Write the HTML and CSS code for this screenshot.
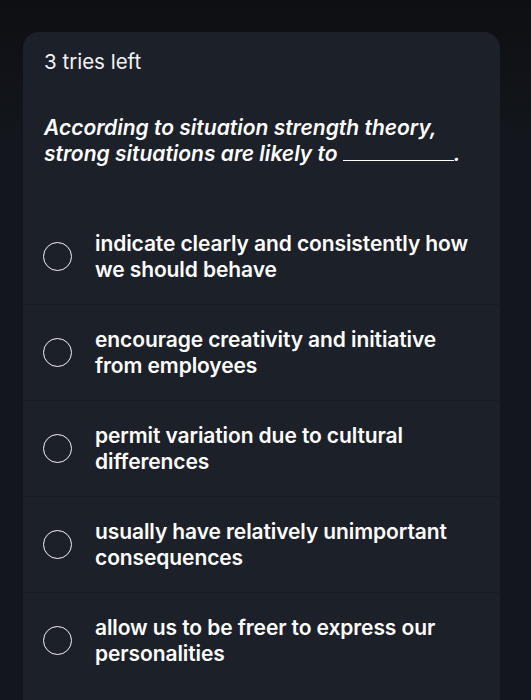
FILE: index.html
```html
<!DOCTYPE html>
<html>

<head>
  <title>Question</title>
  <link rel="stylesheet" href="styles.css">
</head>

<body>
  <div class="quizCard">
    <div class="tries">3 tries left</div>
    <div class="question">
      According to situation strength theory, strong situations are likely to <span class="blank"></span>.
    </div>

    <div class="options">
      <div class="option">
        <span class="radio"></span>
        <span class="optionText">indicate clearly and consistently how we should behave</span>
      </div>
      <div class="option">
        <span class="radio"></span>
        <span class="optionText">encourage creativity and initiative from employees</span>
      </div>
      <div class="option">
        <span class="radio"></span>
        <span class="optionText">permit variation due to cultural differences</span>
      </div>
      <div class="option">
        <span class="radio"></span>
        <span class="optionText">usually have relatively unimportant consequences</span>
      </div>
      <div class="option">
        <span class="radio"></span>
        <span class="optionText">allow us to be freer to express our personalities</span>
      </div>
    </div>
  </div>
</body>

</html>
```

FILE: styles.css
```css
body {
  margin: 0;
  padding: 32px 31px 0 23px;
  background: linear-gradient(#0d0f13, #13161c 140px);
  font-family: Inter, "Noto Sans", sans-serif;
  color: #fff;
  height: 700px;
  box-sizing: border-box;
  overflow: hidden;
}

.quizCard {
  background: #1c2029;
  border-radius: 16px 16px 0 0;
  min-height: 700px;
}

.tries {
  padding: 18px 21px 0;
  font-size: 20.5px;
  line-height: 24px;
  color: #f2f3f5;
}

.question {
  padding: 41px 21px 0;
  font-size: 21px;
  font-style: italic;
  font-weight: 600;
  line-height: 26px;
}

.blank {
  display: inline-block;
  width: 111px;
  border-bottom: 1.5px solid #fff;
}

.options {
  margin-top: 42px;
}

.option {
  display: flex;
  align-items: center;
  height: 95px;
  border-bottom: 1px solid #181b23;
}

.option:last-child {
  border-bottom: none;
}

.radio {
  flex: none;
  width: 27px;
  height: 27px;
  border: 1.6px solid #f2f3f5;
  border-radius: 50%;
  margin: 0 23px 0 20px;
}

.optionText {
  font-size: 21px;
  font-weight: 600;
  line-height: 26px;
  letter-spacing: -0.1px;
  padding-right: 20px;
}
```
